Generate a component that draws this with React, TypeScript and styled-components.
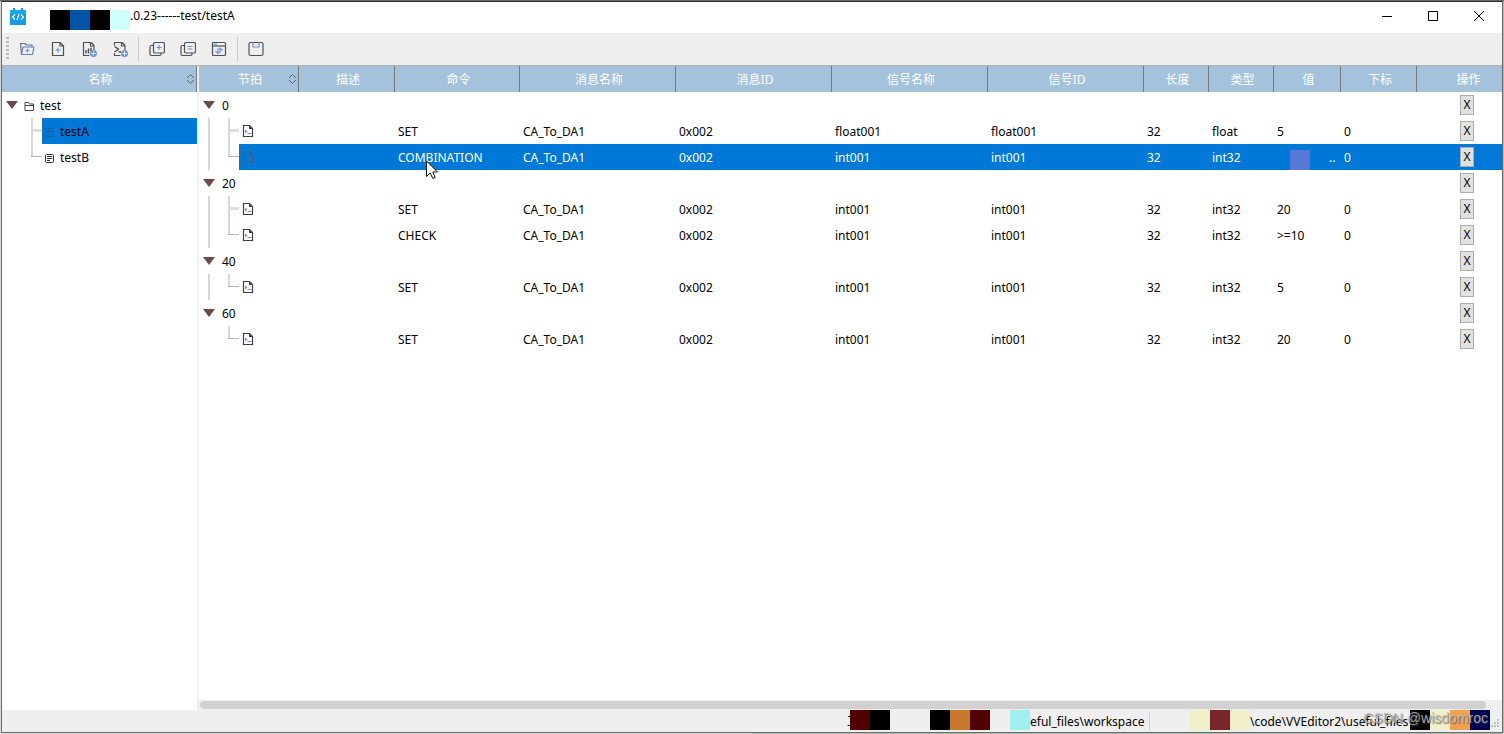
import React from 'react';
import styled, { createGlobalStyle, css } from 'styled-components';

const GlobalStyle = createGlobalStyle`
  * { box-sizing: border-box; }
  body {
    margin: 0;
    background: linear-gradient(90deg, #d8d8d8 50%, #a9bcae 50%);
    color: #000;
    font: 12px/16px "Noto Sans", "Noto Sans CJK SC", sans-serif;
  }
  button {
    margin: 0;
    padding: 0;
    border: 0;
    background: none;
    color: inherit;
    font: inherit;
  }
`;

const Desktop = styled.div`
  height: 100vh;
  padding: 1px;
  box-shadow: inset 0 1px #666;
`;

const Window = styled.main`
  position: relative;
  display: flex;
  flex-direction: column;
  height: 100%;
  border: 1px solid #6b6b6b;
  border-top-color: #2b2b2b;
  background: #efefef;
  overflow: hidden;
`;

const TitleBar = styled.header`
  display: flex;
  align-items: flex-start;
  flex: none;
  height: 31px;
  padding-left: 8px;
  background: #fff;
`;

const Logo = styled.svg`
  margin-top: 6px;
`;

const AppTitle = styled.h1`
  flex: 1;
  display: flex;
  align-items: flex-start;
  margin: 0 0 0 24px;
  font-size: 12px;
  line-height: 28px;
  font-weight: 400;
`;

const Tiles = styled.span<{ $top?: number }>`
  display: flex;
  align-self: flex-start;
  margin-top: ${(p) => p.$top ?? 0}px;
`;

const Tile = styled.span<{ $color: string }>`
  width: 20px;
  height: 20px;
  background: ${(p) => p.$color};
`;

const CaptionButton = styled.button`
  display: grid;
  place-items: center;
  width: 46px;
  height: 28px;
`;

const Toolbar = styled.div`
  display: flex;
  align-items: center;
  flex: none;
  height: 32px;
  padding-left: 4px;
`;

const Handle = styled.span`
  width: 3px;
  height: 24px;
  margin-right: 2px;
  background: repeating-linear-gradient(#bbb 0 2px, transparent 2px 4px);
`;

const ToolButton = styled.button`
  display: grid;
  place-items: center;
  width: 31px;
  height: 28px;
`;

const ToolDivider = styled.span`
  width: 1px;
  height: 24px;
  margin: 0 2px 0 3px;
  background: #c8c8c8;
`;

const Body = styled.div`
  display: flex;
  flex: 1;
  min-height: 0;
  gap: 2px;
  border-top: 1px solid #b0b0b0;
`;

const headerCell = css`
  height: 26px;
  padding: 1px 0 0 3px;
  border-right: 1px solid #777;
  background: #a5c2dd;
  color: #fff;
  font-weight: 400;
  text-align: center;
`;

const Sidebar = styled.aside`
  flex: none;
  width: 195px;
  background: #fff;
`;

const SidebarTitle = styled.h2`
  ${headerCell}
  position: relative;
  margin: 0;
  font-size: 12px;
  line-height: 26px;
`;

const SortMark = styled.span`
  position: absolute;
  top: 0;
  right: 1px;
  display: flex;
  align-items: center;
  height: 26px;
`;

const Tree = styled.ul`
  margin: 0;
  padding: 0;
  list-style: none;
`;

const TreeRow = styled.div`
  display: flex;
  align-items: stretch;
  height: 26px;
`;

const TreeIndent = styled.span`
  flex: none;
  width: 20px;
`;

const TreeItem = styled.button<{ $selected?: boolean }>`
  display: flex;
  flex: 1;
  align-items: center;
  gap: 5px;
  padding: 2px 0 0 2px;
  text-align: left;
  background: ${(p) => (p.$selected ? '#0078d7' : 'transparent')};
`;

const Toggle = styled.button`
  display: grid;
  place-items: center;
  flex: none;
  width: 20px;
`;

const Content = styled.section`
  display: flex;
  flex: 1;
  flex-direction: column;
  min-width: 0;
`;

const TableView = styled.div`
  flex: 1;
  min-height: 0;
  overflow: hidden;
  background: #fff;
`;

const Table = styled.table`
  width: 100%;
  min-width: 1318px;
  table-layout: fixed;
  border-collapse: separate;
  border-spacing: 0;
`;

const HeadCell = styled.th`
  ${headerCell}
  position: relative;
  padding-top: 2px;
  &:last-child { border-right: 0; }
`;

const Row = styled.tr<{ $selected?: boolean }>`
  ${(p) =>
    p.$selected &&
    css`
      color: #fff;
      td:not(:first-child) { background: #0078d7; }
    `}
`;

const Cell = styled.td`
  height: 26px;
  padding: 2px 0 0 3px;
  white-space: nowrap;
`;

const TreeCell = styled(Cell)`
  padding: 0;
`;

const GroupLabel = styled.span`
  align-self: center;
  padding: 2px 0 0 3px;
`;

const StepIcon = styled.span<{ $selected?: boolean }>`
  display: flex;
  flex: 1;
  align-items: center;
  padding-left: 3px;
  background: ${(p) => (p.$selected ? '#0078d7' : 'transparent')};
`;

const MaskedValue = styled.span`
  display: flex;
  align-items: flex-end;
  gap: 19px;
  height: 24px;
  padding-left: 13px;
  line-height: 24px;
`;

const ActionCell = styled(Cell)`
  padding: 0;
  text-align: center;
  line-height: 0;
`;

const DeleteButton = styled.button`
  width: 14px;
  height: 20px;
  border: 1px solid #adadad;
  background: #e1e1e1;
  color: #000;
  line-height: 18px;
`;

const ScrollTrack = styled.div`
  flex: none;
  height: 10px;
  padding: 1px 16px 1px 1px;
`;

const ScrollThumb = styled.div`
  height: 8px;
  border-radius: 4px;
  background: #d1d1d1;
`;

const StatusBar = styled.footer`
  display: flex;
  align-items: center;
  justify-content: flex-end;
  flex: none;
  height: 22px;
`;

const StatusGap = styled.span<{ $w: number }>`
  width: ${(p) => p.$w}px;
`;

const StatusText = styled.span<{ $w: number }>`
  width: ${(p) => p.$w}px;
  padding-top: 2px;
  overflow: hidden;
  white-space: nowrap;
`;

const StatusDivider = styled.span`
  width: 1px;
  height: 18px;
  background: #d0d0d0;
`;

const Grip = styled.span`
  align-self: flex-end;
  width: 12px;
  height: 14px;
`;

const Watermark = styled.span`
  position: absolute;
  right: 14px;
  bottom: 6px;
  color: rgba(190, 190, 190, 0.85);
  font: 14px/16px "Liberation Sans", sans-serif;
  text-shadow: 1px 1px 1px rgba(70, 70, 70, 0.7);
`;

const Pointer = styled.svg`
  position: absolute;
  left: 424px;
  top: 158px;
`;

const INK = '#505050';
const BLUE = '#6f92dc';

const LogoIcon = () => (
  <Logo width="16" height="17" viewBox="0 0 16 17">
    <path d="M0 2h16v15H0z" fill="#149ae8" />
    <path d="M0 2h16v4H0z" fill="#19a9f0" />
    <path d="M3 0h2v3H3zM11 0h2v3h-2z" fill="#1595e5" />
    <path d="M5 6.500 2.500 9 5 11.500M11 6.500 13.500 9 11 11.500M9 6 7 12" fill="none" stroke="#fff" strokeWidth="1.200" />
  </Logo>
);

const Icon = ({ children }: { children: React.ReactNode }) => (
  <svg width="16" height="16" viewBox="0 0 16 16" fill="none" stroke={INK} strokeWidth="1.200" strokeLinejoin="round">
    {children}
  </svg>
);

const PlusBadge = () => (
  <g>
    <circle cx="12.500" cy="12.500" r="3.500" fill={BLUE} stroke="none" />
    <path d="M12.500 10.500v4M10.500 12.500h4" stroke="#fff" strokeWidth="1" />
  </g>
);

const OpenFolderIcon = () => (
  <Icon>
    <path d="M2.500 13.500 1.500 2.500H6L7.500 4H13v2" stroke="#6b7280" />
    <path d="M4 6h11l-1.500 7.500H2.500z" stroke="#5f7fc8" />
    <path d="M8.500 7.500v4M6.500 9.500h4" stroke={BLUE} />
  </Icon>
);

const NewFileIcon = () => (
  <Icon>
    <path d="M2.500 1.500H10L13.500 5v9.500h-11z" />
    <path d="M10 1.500V5h3.500" />
    <path d="M8 6.500v5M5.500 9h5" stroke={BLUE} />
  </Icon>
);

const ChartFileIcon = () => (
  <Icon>
    <path d="M8.500 14.500h-6v-13H10L13 4.500V9M9.500 1.500V5H13" />
    <path d="M5 9v3.500M7.500 7.500v5M10 6.500V10" strokeWidth="1.500" />
    <PlusBadge />
  </Icon>
);

const ScriptFileIcon = () => (
  <Icon>
    <path d="M8.500 14.500h-6V12M2.500 4.500v-3H10L13 4.500V9M9.500 1.500V5H13" />
    <path d="M2.500 5.500 6.500 8.200 2.500 11M6.500 11H9" strokeWidth="1.400" />
    <PlusBadge />
  </Icon>
);

const CopyIcon = ({ equal }: { equal?: boolean }) => (
  <Icon>
    <rect x="4.500" y="1.500" width="11" height="10.500" rx="1.500" />
    <path d="M4 4.500H2.500A1.500 1.500 0 0 0 1 6v7a1.500 1.500 0 0 0 1.500 1.500h8A1.500 1.500 0 0 0 12 13v-1" />
    <path d={equal ? 'M7.500 5.500h5M7.500 8h5' : 'M10 4v5M7.500 6.500h5'} stroke={BLUE} />
  </Icon>
);

const PanelIcon = () => (
  <Icon>
    <rect x="1.500" y="1.500" width="13" height="13" rx="1" />
    <path d="M1.500 5h13" />
    <path d="M3 3.200h3" stroke={BLUE} />
    <path d="M4.500 10 7 12.500V7M9 12.500V7l2.500 2.500" stroke={BLUE} />
  </Icon>
);

const SaveIcon = () => (
  <Icon>
    <rect x="1" y="1.500" width="14" height="13" rx="1.500" />
    <path d="M5 1.500V6h6V1.500" stroke={BLUE} />
  </Icon>
);

const FolderIcon = () => (
  <svg width="11" height="11" viewBox="0 0 11 11" fill="none" stroke="#444">
    <path d="M1 9.500v-8h3.500l1 1.500H9.500v6.500zM1 4.500h8.500" />
  </svg>
);

const NoteIcon = ({ faded }: { faded?: boolean }) => (
  <svg width="11" height="11" viewBox="0 0 11 11" fill="none" stroke={faded ? '#1d5c99' : '#333'}>
    <rect x="1.500" y="1.500" width="8" height="8" rx="1" />
    <path d="M3 3.500h5M3 5.500h5M3 7.500h3" />
  </svg>
);

const StepFileIcon = ({ faded }: { faded?: boolean }) => {
  const ink = faded ? '#3d5f80' : '#3f3f3f';
  const accent = faded ? '#3a6ba3' : BLUE;
  return (
    <svg width="12" height="14" viewBox="0 0 12 14" fill={faded ? 'none' : '#fff'} stroke={ink}>
      <path d="M1.500 1.500H7.500L10.500 4.500v8h-9z" strokeWidth="1.200" />
      <path d="M7 1.500 10.500 5H7z" fill={ink} stroke="none" />
      <path d="M3 5.500 5.500 7.500 3 9.500z" fill={accent} stroke="none" />
      <path d="M5.500 9.500h4" stroke={accent} />
    </svg>
  );
};

const TriangleIcon = () => (
  <svg width="12" height="8" viewBox="0 0 12 8">
    <path d="M0 0h12L6 8z" fill="#6b4a48" />
  </svg>
);

const SortIcon = () => (
  <svg width="9" height="12" viewBox="0 0 9 12" fill="none" stroke="#5c6670">
    <path d="M1 5 4.500 1.500 8 5M1 7l3.500 3.500L8 7" />
  </svg>
);

const Branch = ({ kind }: { kind: 'pass' | 'tee' | 'end' }) => (
  <svg width="20" height="26" viewBox="0 0 20 26">
    <path d={kind === 'end' ? 'M9 0h2v12H9z' : 'M9 0h2v26H9z'} fill="#d9d6d3" />
    {kind === 'tee' && <path d="M11 11h9v3h-9z" fill="#e0dedb" />}
    {kind === 'end' && <path d="M9 12h11v1H9z" fill="#b8b2ae" />}
  </svg>
);

const columns = [
  ['节拍', 100], ['描述', 96], ['命令', 125], ['消息名称', 156], ['消息ID', 156], ['信号名称', 156],
  ['信号ID', 156], ['长度', 65], ['类型', 65], ['值', 67], ['下标', 76], ['操作', 100],
] as const;

type Step = { command: string; signal: string; type: string; value?: string; selected?: boolean };

const groups: { beat: string; steps: Step[] }[] = [
  {
    beat: '0',
    steps: [
      { command: 'SET', signal: 'float001', type: 'float', value: '5' },
      { command: 'COMBINATION', signal: 'int001', type: 'int32', selected: true },
    ],
  },
  {
    beat: '20',
    steps: [
      { command: 'SET', signal: 'int001', type: 'int32', value: '20' },
      { command: 'CHECK', signal: 'int001', type: 'int32', value: '>=10' },
    ],
  },
  { beat: '40', steps: [{ command: 'SET', signal: 'int001', type: 'int32', value: '5' }] },
  { beat: '60', steps: [{ command: 'SET', signal: 'int001', type: 'int32', value: '20' }] },
];

const tools = [
  [
    ['Open folder', <OpenFolderIcon />],
    ['New file', <NewFileIcon />],
    ['New chart', <ChartFileIcon />],
    ['New script', <ScriptFileIcon />],
  ],
  [
    ['Add copy', <CopyIcon />],
    ['Duplicate', <CopyIcon equal />],
    ['Transfer', <PanelIcon />],
  ],
  [['Save', <SaveIcon />]],
] as [string, React.ReactElement][][];

const TileRow = ({ colors, top }: { colors: string[]; top?: number }) => (
  <Tiles $top={top}>
    {colors.map((c, i) => <Tile key={i} $color={c} />)}
  </Tiles>
);

const DeleteCell = () => (
  <ActionCell><DeleteButton>X</DeleteButton></ActionCell>
);

export default function App() {
  return (
    <Desktop>
      <GlobalStyle />
      <Window>
        <TitleBar>
          <LogoIcon />
          <AppTitle>
            <TileRow top={8} colors={['#000', '#0054a8', '#000', '#d0ffff']} />
            .0.23------test/testA
          </AppTitle>
          <CaptionButton aria-label="Minimize">
            <svg width="10" height="10"><path d="M0 5h10v1H0z" /></svg>
          </CaptionButton>
          <CaptionButton aria-label="Maximize">
            <svg width="10" height="10" fill="none" stroke="#000"><path d="M.5.5h9v9h-9z" /></svg>
          </CaptionButton>
          <CaptionButton aria-label="Close">
            <svg width="10" height="10" stroke="#000"><path d="m0 0 10 10M10 0 0 10" /></svg>
          </CaptionButton>
        </TitleBar>

        <Toolbar role="toolbar">
          <Handle />
          {tools.map((group, g) => (
            <React.Fragment key={g}>
              {g > 0 && <ToolDivider />}
              {group.map(([label, icon]) => (
                <ToolButton key={label} aria-label={label}>{icon}</ToolButton>
              ))}
            </React.Fragment>
          ))}
        </Toolbar>

        <Body>
          <Sidebar>
            <SidebarTitle>名称<SortMark><SortIcon /></SortMark></SidebarTitle>
            <Tree>
              <li>
                <TreeRow>
                  <Toggle aria-label="Collapse test"><TriangleIcon /></Toggle>
                  <TreeItem><FolderIcon />test</TreeItem>
                </TreeRow>
                <Tree>
                  {['testA', 'testB'].map((name, i) => (
                    <li key={name}>
                      <TreeRow>
                        <TreeIndent />
                        <Branch kind={i === 0 ? 'tee' : 'end'} />
                        <TreeItem $selected={i === 0}><NoteIcon faded={i === 0} />{name}</TreeItem>
                      </TreeRow>
                    </li>
                  ))}
                </Tree>
              </li>
            </Tree>
          </Sidebar>

          <Content>
            <TableView>
              <Table>
                <colgroup>
                  {columns.map(([name, w]) => <col key={name} width={w} />)}
                </colgroup>
                <thead>
                  <tr>
                    {columns.map(([name], i) => (
                      <HeadCell key={name}>
                        {name}
                        {i === 0 && <SortMark><SortIcon /></SortMark>}
                      </HeadCell>
                    ))}
                  </tr>
                </thead>
                <tbody>
                  {groups.map((group, g) => (
                    <React.Fragment key={group.beat}>
                      <Row>
                        <TreeCell colSpan={11}>
                          <TreeRow>
                            <Toggle aria-label={`Collapse ${group.beat}`}><TriangleIcon /></Toggle>
                            <GroupLabel>{group.beat}</GroupLabel>
                          </TreeRow>
                        </TreeCell>
                        <DeleteCell />
                      </Row>
                      {group.steps.map((step, s) => (
                        <Row key={s} $selected={step.selected}>
                          <TreeCell>
                            <TreeRow>
                              {g < groups.length - 1 ? <Branch kind="pass" /> : <TreeIndent />}
                              <Branch kind={s < group.steps.length - 1 ? 'tee' : 'end'} />
                              <StepIcon $selected={step.selected}><StepFileIcon faded={step.selected} /></StepIcon>
                            </TreeRow>
                          </TreeCell>
                          <Cell />
                          <Cell>{step.command}</Cell>
                          <Cell>CA_To_DA1</Cell>
                          <Cell>0x002</Cell>
                          <Cell>{step.signal}</Cell>
                          <Cell>{step.signal}</Cell>
                          <Cell>32</Cell>
                          <Cell>{step.type}</Cell>
                          <Cell>{step.value ?? <MaskedValue><Tile $color="#5878d8" />..</MaskedValue>}</Cell>
                          <Cell>0</Cell>
                          <DeleteCell />
                        </Row>
                      ))}
                    </React.Fragment>
                  ))}
                </tbody>
              </Table>
            </TableView>
            <ScrollTrack><ScrollThumb /></ScrollTrack>
          </Content>
        </Body>

        <StatusBar>
          <StatusText $w={3}>工</StatusText>
          <TileRow colors={['#500000', '#000']} />
          <StatusGap $w={40} />
          <TileRow colors={['#000', '#c8782c', '#500000']} />
          <StatusGap $w={20} />
          <TileRow colors={['#a0f0f0']} />
          <StatusText $w={119}>eful_files\workspace</StatusText>
          <StatusDivider />
          <StatusGap $w={40} />
          <TileRow colors={['#f0f0c8', '#78282a', '#f0f0c8']} />
          <StatusText $w={160}>\code\VVEditor2\useful_files</StatusText>
          <TileRow colors={['#000', '#f0f0c8', '#f0a050', '#000050']} />
          <Grip>
            <svg width="12" height="14" fill="#bfbfbf">
              <path d="M7 1h2v2H7zM4 4h2v2H4zM7 4h2v2H7zM1 7h2v2H1zM4 7h2v2H4zM7 7h2v2H7z" />
            </svg>
          </Grip>
        </StatusBar>

        <Watermark>CSDN @wisdomroc</Watermark>
        <Pointer width="13" height="20" viewBox="0 0 13 20" fill="#fff" stroke="#111">
          <path d="M.5 1v15.500L4.200 13l2.600 5.500 2.400-1L6.800 12H11.500z" />
        </Pointer>
      </Window>
    </Desktop>
  );
}
